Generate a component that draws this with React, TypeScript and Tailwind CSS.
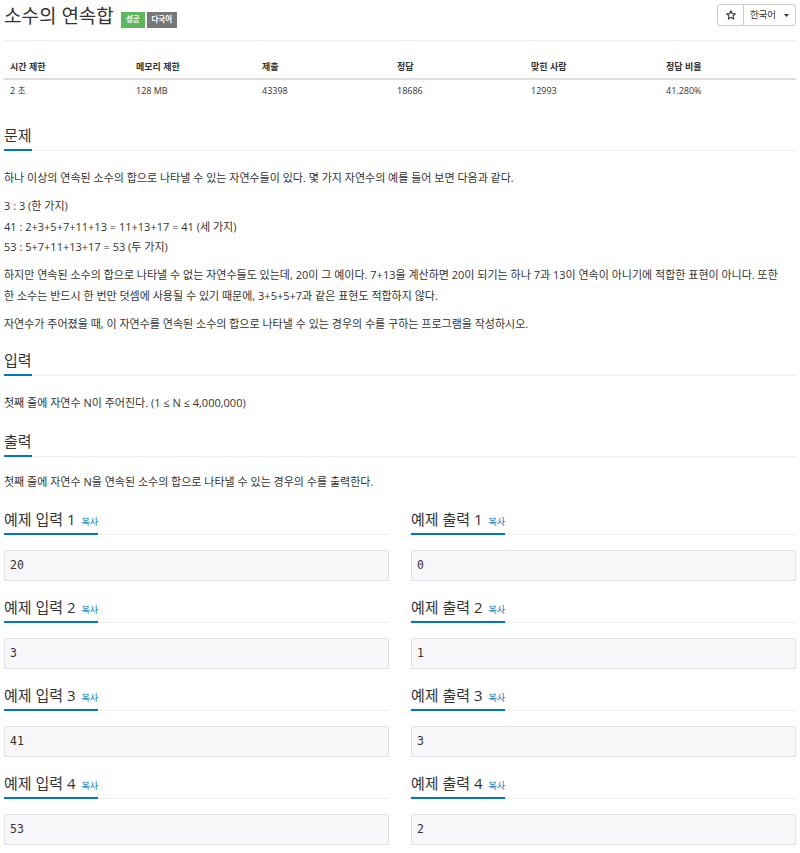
const BODY_FONT = "font-['Open_Sans','Noto_Sans_CJK_KR',sans-serif]";

const STATS = [
  { label: "시간 제한", value: "2 초", w: "w-[126px]" },
  { label: "메모리 제한", value: "128 MB", w: "w-[126px]" },
  { label: "제출", value: "43398", w: "w-[135px]" },
  { label: "정답", value: "18686", w: "w-[134px]" },
  { label: "맞힌 사람", value: "12993", w: "w-[135px]" },
  { label: "정답 비율", value: "41.280%", w: "" },
];

const SAMPLES = [
  { n: 1, input: "20", output: "0" },
  { n: 2, input: "3", output: "1" },
  { n: 3, input: "41", output: "3" },
  { n: 4, input: "53", output: "2" },
];

function Headline({
  children,
  className = "",
}: {
  children: React.ReactNode;
  className?: string;
}) {
  return (
    <div className={`flex border-b border-[#eee] ${className}`}>
      <h2 className="-mb-px inline-block h-[26px] border-b-2 border-[#0076c0] pb-[4px] text-[15px] leading-[20px] font-normal text-[#333]">
        {children}
      </h2>
    </div>
  );
}

function StarIcon() {
  return (
    <svg width="10" height="10" viewBox="0 0 20 20" fill="none">
      <polygon
        points="10,1.5 12.5,7.3 18.6,7.8 14,11.9 15.4,18 10,14.8 4.6,18 6,11.9 1.4,7.8 7.5,7.3"
        stroke="#333"
        strokeWidth="2.2"
        strokeLinejoin="round"
      />
    </svg>
  );
}

function SampleBlock({ title, value }: { title: string; value: string }) {
  return (
    <div>
      <Headline>
        {title}
        <a className="ml-[6px] cursor-pointer text-[9px] leading-none text-[#0076c0]">복사</a>
      </Headline>
      <pre className="mt-[15px] border border-[#e1e1e8] bg-[#f7f7f9] px-[5px] py-[7px] font-['DejaVu_Sans_Mono',monospace] text-[11.5px] leading-[15px] text-[#333]">
        {value}
      </pre>
    </div>
  );
}

export default function App() {
  return (
    <div className={`min-h-[853px] w-[800px] bg-white px-[4px] text-[#333] ${BODY_FONT}`}>
      {/* title bar */}
      <div className="flex h-[41px] items-start justify-between border-b border-[#eee]">
        <div className="flex items-start pt-[3px]">
          <h1 className="text-[19px] leading-[26px] font-normal text-[#333]">소수의 연속합</h1>
          <span className="ml-[7px] mt-[9px] flex h-[16px] w-[24px] items-center justify-center bg-[#5cb85c] text-[7.5px] font-bold text-white">
            성공
          </span>
          <span className="ml-[2px] mt-[9px] flex h-[16px] w-[30px] items-center justify-center bg-[#777] text-[7.5px] font-bold text-white">
            다국어
          </span>
        </div>
        <div className="mt-[4px] flex h-[22px] rounded-[3px] border border-[#ccc] bg-white">
          <button className="flex w-[26px] items-center justify-center border-r border-[#ccc]">
            <StarIcon />
          </button>
          <button className="flex w-[51px] items-center justify-center gap-[8px] text-[9.5px] text-[#333]">
            한국어
            <svg width="5" height="3" viewBox="0 0 5 3">
              <polygon points="0,0 5,0 2.5,3" fill="#333" />
            </svg>
          </button>
        </div>
      </div>

      {/* stats table */}
      <table className="mt-[14px] w-full border-collapse text-[9px]">
        <thead>
          <tr>
            {STATS.map((s) => (
              <th
                key={s.label}
                className={`${s.w} border-b-2 border-[#ddd] pb-[5px] pl-[6px] pt-[6px] text-left leading-[12px] font-bold`}
              >
                {s.label}
              </th>
            ))}
          </tr>
        </thead>
        <tbody>
          <tr>
            {STATS.map((s) => (
              <td key={s.label} className="py-[5px] pl-[6px] leading-[12px]">
                {s.value}
              </td>
            ))}
          </tr>
        </tbody>
      </table>

      {/* problem */}
      <Headline className="mt-[23px]">문제</Headline>
      <div className="mt-[17px] flex flex-col gap-[7.5px] text-[11px] leading-[20.5px]">
        <p>하나 이상의 연속된 소수의 합으로 나타낼 수 있는 자연수들이 있다. 몇 가지 자연수의 예를 들어 보면 다음과 같다.</p>
        <p>
          3 : 3 (한 가지)
          <br />
          41 : 2+3+5+7+11+13 = 11+13+17 = 41 (세 가지)
          <br />
          53 : 5+7+11+13+17 = 53 (두 가지)
        </p>
        <p>
          하지만 연속된 소수의 합으로 나타낼 수 없는 자연수들도 있는데, 20이 그 예이다. 7+13을 계산하면 20이 되기는 하나 7과 13이 연속이 아니기에 적합한 표현이 아니다. 또한
          <br />
          한 소수는 반드시 한 번만 덧셈에 사용될 수 있기 때문에, 3+5+5+7과 같은 표현도 적합하지 않다.
        </p>
        <p>자연수가 주어졌을 때, 이 자연수를 연속된 소수의 합으로 나타낼 수 있는 경우의 수를 구하는 프로그램을 작성하시오.</p>
      </div>

      {/* input */}
      <Headline className="mt-[16px]">입력</Headline>
      <p className="mt-[17px] text-[11px] leading-[20.5px]">첫째 줄에 자연수 N이 주어진다. (1 ≤ N ≤ 4,000,000)</p>

      {/* output */}
      <Headline className="mt-[17px]">출력</Headline>
      <p className="mt-[15px] text-[11px] leading-[20.5px]">첫째 줄에 자연수 N을 연속된 소수의 합으로 나타낼 수 있는 경우의 수를 출력한다.</p>

      {/* samples */}
      <div className="mt-[17px] grid grid-cols-2 gap-x-[22px] gap-y-[16px]">
        {SAMPLES.map((s) => [
          <SampleBlock key={`i${s.n}`} title={`예제 입력 ${s.n}`} value={s.input} />,
          <SampleBlock key={`o${s.n}`} title={`예제 출력 ${s.n}`} value={s.output} />,
        ])}
      </div>
    </div>
  );
}
